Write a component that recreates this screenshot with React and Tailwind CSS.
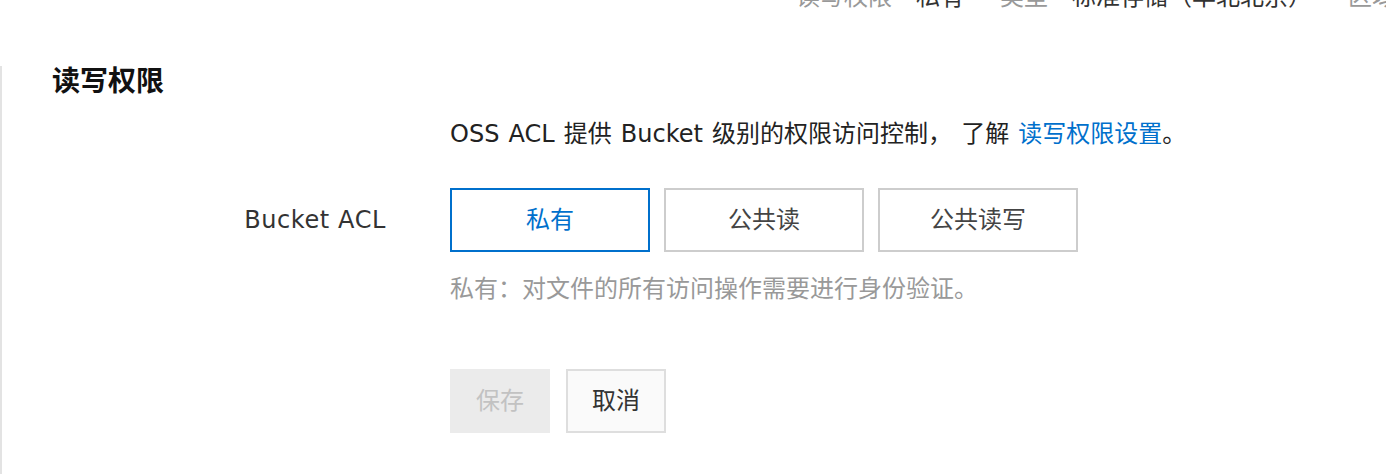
const font = "font-['DejaVu_Sans','Noto_Sans_CJK_SC',sans-serif]";

const summary = [
  { label: "读写权限", value: "私有" },
  { label: "类型", value: "标准存储（华北北京）" },
  { label: "区域", value: "华北 2（北京）" },
];

const aclOptions = ["私有", "公共读", "公共读写"];

export default function App() {
  const selected = "私有";

  return (
    <div className={`h-[474px] w-[1386px] overflow-hidden bg-white ${font}`}>
      {/* bucket summary, scrolled mostly out of view */}
      <div className="-mt-[15px] flex h-[24px] pl-[796px] text-[24px] leading-[24px] whitespace-nowrap">
        {summary.map((item) => (
          <div key={item.label} className="mr-[36px] flex gap-[24px]">
            <span className="text-[#999]">{item.label}</span>
            <span className="text-[#333]">{item.value}</span>
          </div>
        ))}
      </div>

      <section className="mt-[57px] h-[420px] border-l-2 border-[#e3e3e3] pl-[50px]">
        <h2 className="text-[28px] leading-[32px] font-bold text-[#111]">读写权限</h2>

        <div className="mt-[20px] flex text-[24px] leading-[32px]">
          <div className="w-[398px] shrink-0" />
          <p className="text-[#222] [word-spacing:1.5px]">
            OSS ACL 提供 Bucket 级别的权限访问控制， 了解{" "}
            <a className="text-[#0070cc]">读写权限设置</a>。
          </p>
        </div>

        <div className="mt-[38px] flex items-center text-[24px]">
          <label className="w-[334px] shrink-0 text-right leading-[32px] tracking-[0.6px] text-[#333]">
            Bucket ACL
          </label>
          <div className="ml-[64px] flex gap-[14px]">
            {aclOptions.map((opt) => (
              <button
                key={opt}
                className={
                  opt === selected
                    ? "flex h-[64px] w-[200px] items-center justify-center border-2 border-[#0070cc] bg-white text-[#0070cc]"
                    : "flex h-[64px] w-[200px] items-center justify-center border-2 border-[#cdcdcd] bg-white text-[#444]"
                }
              >
                {opt}
              </button>
            ))}
          </div>
        </div>

        <div className="mt-[21px] flex text-[24px] leading-[32px]">
          <div className="w-[398px] shrink-0" />
          <p className="text-[#999]">私有：对文件的所有访问操作需要进行身份验证。</p>
        </div>

        <div className="mt-[64px] flex gap-[16px] text-[24px]">
          <div className="w-[382px] shrink-0" />
          <button className="flex h-[64px] w-[100px] items-center justify-center bg-[#ebebeb] text-[#c2c2c2]">
            保存
          </button>
          <button className="flex h-[64px] w-[100px] items-center justify-center border-2 border-[#dedede] bg-[#fafafa] text-[#333]">
            取消
          </button>
        </div>
      </section>
    </div>
  );
}
